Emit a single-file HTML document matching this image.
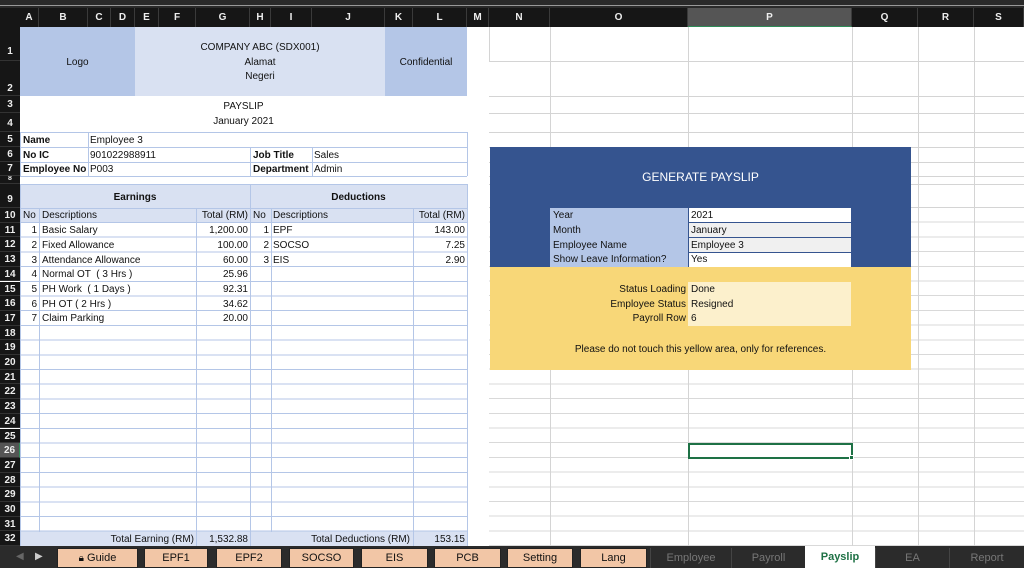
<!DOCTYPE html>
<html><head><meta charset="utf-8"><style>
*{margin:0;padding:0;box-sizing:border-box}
body{width:1024px;height:568px;overflow:hidden;background:#fff;font-family:"Liberation Sans",Arial,sans-serif;font-size:10px;color:#111;position:relative}
.a{position:absolute}
.t{position:absolute;white-space:nowrap;line-height:14px;margin-top:1px}
.ch{position:absolute;top:8px;height:19px;color:#eee;font-weight:bold;font-size:10px;text-align:center;line-height:19px;border-right:1px solid #3a3a3a}
.rh{position:absolute;left:0;width:20px;color:#eee;font-weight:bold;font-size:10px;text-align:center;background:#161616;border-bottom:1px solid #333}
.hl{position:absolute;height:1px;background:#d4d4d4}
.vl{position:absolute;width:1px;background:#d4d4d4}
.bl{position:absolute;height:1px;background:#b4c6e7}
.bv{position:absolute;width:1px;background:#b4c6e7}
.r{text-align:right}
.tab{position:absolute;top:548px;height:20px;background:#f2c6a6;border:1px solid #222;text-align:center;line-height:18px;font-size:11px;color:#111}
.dt{position:absolute;top:548px;height:20px;text-align:center;line-height:20px;font-size:11px;color:#777;border-left:1px solid #444}
</style></head><body>
<div class="a" style="left:0;top:0;width:1024px;height:8px;background:#2a2a2a"></div>
<div class="a" style="left:0;top:5px;width:1024px;height:1px;background:#999"></div>
<div class="a" style="left:0;top:8px;width:1024px;height:19px;background:#161616"></div>
<div class="ch" style="left:20px;width:19px">A</div>
<div class="ch" style="left:39px;width:49px">B</div>
<div class="ch" style="left:88px;width:23px">C</div>
<div class="ch" style="left:111px;width:24px">D</div>
<div class="ch" style="left:135px;width:24px">E</div>
<div class="ch" style="left:159px;width:37px">F</div>
<div class="ch" style="left:196px;width:54px">G</div>
<div class="ch" style="left:250px;width:21px">H</div>
<div class="ch" style="left:271px;width:41px">I</div>
<div class="ch" style="left:312px;width:73px">J</div>
<div class="ch" style="left:385px;width:28px">K</div>
<div class="ch" style="left:413px;width:54px">L</div>
<div class="ch" style="left:467px;width:22px">M</div>
<div class="ch" style="left:489px;width:61px">N</div>
<div class="ch" style="left:550px;width:138px">O</div>
<div class="ch" style="left:688px;width:164px;background:#555;border-bottom:1px solid #2e8b57">P</div>
<div class="ch" style="left:852px;width:66px">Q</div>
<div class="ch" style="left:918px;width:56px">R</div>
<div class="ch" style="left:974px;width:50px">S</div>

<div class="rh" style="top:27px;height:34px;line-height:50px">1</div>
<div class="rh" style="top:61px;height:35px;line-height:56px">2</div>
<div class="rh" style="top:96px;height:17px;line-height:18px">3</div>
<div class="rh" style="top:113px;height:19px;line-height:22px">4</div>
<div class="rh" style="top:132px;height:15px;line-height:15px">5</div>
<div class="rh" style="top:147px;height:15px;line-height:15px">6</div>
<div class="rh" style="top:162px;height:14px;line-height:14px">7</div>
<div class="rh" style="top:176px;height:8px;line-height:6px;font-size:7px;overflow:hidden">8</div>
<div class="rh" style="top:184px;height:24px;line-height:32px">9</div>
<div class="rh" style="top:208px;height:14.7px;line-height:15px">10</div>
<div class="rh" style="top:222.7px;height:14.7px;line-height:15px">11</div>
<div class="rh" style="top:237.4px;height:14.7px;line-height:15px">12</div>
<div class="rh" style="top:252.1px;height:14.7px;line-height:15px">13</div>
<div class="rh" style="top:266.8px;height:14.7px;line-height:15px">14</div>
<div class="rh" style="top:281.5px;height:14.7px;line-height:15px">15</div>
<div class="rh" style="top:296.2px;height:14.7px;line-height:15px">16</div>
<div class="rh" style="top:310.9px;height:14.7px;line-height:15px">17</div>
<div class="rh" style="top:325.6px;height:14.7px;line-height:15px">18</div>
<div class="rh" style="top:340.3px;height:14.7px;line-height:15px">19</div>
<div class="rh" style="top:355px;height:14.7px;line-height:15px">20</div>
<div class="rh" style="top:369.7px;height:14.7px;line-height:15px">21</div>
<div class="rh" style="top:384.4px;height:14.7px;line-height:15px">22</div>
<div class="rh" style="top:399.1px;height:14.7px;line-height:15px">23</div>
<div class="rh" style="top:413.8px;height:14.7px;line-height:15px">24</div>
<div class="rh" style="top:428.5px;height:14.7px;line-height:15px">25</div>
<div class="rh" style="top:443.2px;height:14.7px;line-height:15px;background:#555;border-right:1px solid #2e8b57">26</div>
<div class="rh" style="top:457.9px;height:14.7px;line-height:15px">27</div>
<div class="rh" style="top:472.6px;height:14.7px;line-height:15px">28</div>
<div class="rh" style="top:487.3px;height:14.7px;line-height:15px">29</div>
<div class="rh" style="top:502px;height:14.7px;line-height:15px">30</div>
<div class="rh" style="top:516.7px;height:14.7px;line-height:15px">31</div>
<div class="rh" style="top:531.4px;height:14.6px;line-height:15px">32</div>

<div class="a" style="left:489px;top:208px;width:535px;height:338px;background:repeating-linear-gradient(to bottom,transparent 0,transparent 13.7px,#d9d9d9 13.7px,#d9d9d9 14.7px)"></div>
<div class="hl" style="left:489px;top:61px;width:535px"></div>
<div class="hl" style="left:489px;top:96px;width:535px"></div>
<div class="hl" style="left:489px;top:113px;width:535px"></div>
<div class="hl" style="left:489px;top:132px;width:535px"></div>
<div class="hl" style="left:489px;top:147px;width:535px"></div>
<div class="hl" style="left:489px;top:162px;width:535px"></div>
<div class="hl" style="left:489px;top:176px;width:535px"></div>
<div class="hl" style="left:489px;top:184px;width:535px"></div>
<div class="hl" style="left:489px;top:207px;width:535px"></div>
<div class="vl" style="left:489px;top:27px;height:34px"></div>
<div class="vl" style="left:550px;top:27px;height:519px"></div>
<div class="vl" style="left:688px;top:27px;height:519px"></div>
<div class="vl" style="left:852px;top:27px;height:519px"></div>
<div class="vl" style="left:918px;top:27px;height:519px"></div>
<div class="vl" style="left:974px;top:27px;height:519px"></div>

<div class="a" style="left:490px;top:147px;width:421px;height:120px;background:#35548f"></div>
<div class="t" style="left:490px;top:169px;width:421px;text-align:center;color:#fff;font-size:12px">GENERATE PAYSLIP</div>
<div class="a" style="left:550px;top:208px;width:138px;height:59px;background:#b4c6e7"></div>
<div class="a" style="left:689px;top:208px;width:162px;height:14px;background:#fff"></div>
<div class="a" style="left:689px;top:223px;width:162px;height:14px;background:#f0f0f0"></div>
<div class="a" style="left:689px;top:238px;width:162px;height:14px;background:#f0f0f0"></div>
<div class="a" style="left:689px;top:253px;width:162px;height:14px;background:#fff"></div>
<div class="t" style="left:553px;top:208px">Year</div>
<div class="t" style="left:553px;top:223px">Month</div>
<div class="t" style="left:553px;top:238px">Employee Name</div>
<div class="t" style="left:553px;top:252px">Show Leave Information?</div>
<div class="t" style="left:691px;top:208px">2021</div>
<div class="t" style="left:691px;top:223px">January</div>
<div class="t" style="left:691px;top:238px">Employee 3</div>
<div class="t" style="left:691px;top:252px">Yes</div>
<div class="a" style="left:490px;top:267px;width:421px;height:103px;background:#f8d778"></div>
<div class="a" style="left:688px;top:282px;width:163px;height:44px;background:#fcf0cc"></div>
<div class="t r" style="left:550px;width:136px;top:282px">Status Loading</div>
<div class="t r" style="left:550px;width:136px;top:297px">Employee Status</div>
<div class="t r" style="left:550px;width:136px;top:311px">Payroll Row</div>
<div class="t" style="left:691px;top:282px">Done</div>
<div class="t" style="left:691px;top:297px">Resigned</div>
<div class="t" style="left:691px;top:311px">6</div>
<div class="t" style="left:490px;width:421px;top:342px;text-align:center">Please do not touch this yellow area, only for references.</div>
<div class="a" style="left:688px;top:443px;width:165px;height:16px;border:2px solid #1e7145"></div>
<div class="a" style="left:849px;top:455px;width:5px;height:5px;background:#1e7145;border:1px solid #fff"></div>

<div class="a" style="left:20px;top:27px;width:115px;height:69px;background:#b4c6e7"></div>
<div class="a" style="left:135px;top:27px;width:250px;height:69px;background:#d9e1f2"></div>
<div class="a" style="left:385px;top:27px;width:82px;height:69px;background:#b4c6e7"></div>
<div class="t" style="left:20px;width:115px;top:55px;text-align:center">Logo</div>
<div class="t" style="left:385px;width:82px;top:55px;text-align:center">Confidential</div>
<div class="t" style="left:135px;width:250px;top:40px;text-align:center">COMPANY ABC (SDX001)</div>
<div class="t" style="left:135px;width:250px;top:55px;text-align:center">Alamat</div>
<div class="t" style="left:135px;width:250px;top:69px;text-align:center">Negeri</div>
<div class="t" style="left:20px;width:447px;top:99px;text-align:center">PAYSLIP</div>
<div class="t" style="left:20px;width:447px;top:114px;text-align:center">January 2021</div>

<div class="bl" style="left:20px;top:132px;width:447px"></div>
<div class="bl" style="left:20px;top:147px;width:447px"></div>
<div class="bl" style="left:20px;top:162px;width:447px"></div>
<div class="bl" style="left:20px;top:176px;width:447px"></div>
<div class="bv" style="left:20px;top:132px;height:44px"></div>
<div class="bv" style="left:88px;top:132px;height:44px"></div>
<div class="bv" style="left:250px;top:147px;height:29px"></div>
<div class="bv" style="left:312px;top:147px;height:29px"></div>
<div class="bv" style="left:467px;top:132px;height:44px"></div>
<div class="t" style="left:23px;top:133px;font-weight:bold">Name</div>
<div class="t" style="left:23px;top:148px;font-weight:bold">No IC</div>
<div class="t" style="left:23px;top:162px;font-weight:bold">Employee No</div>
<div class="t" style="left:90px;top:133px">Employee 3</div>
<div class="t" style="left:90px;top:148px">901022988911</div>
<div class="t" style="left:90px;top:162px">P003</div>
<div class="t" style="left:253px;top:148px;font-weight:bold">Job Title</div>
<div class="t" style="left:253px;top:162px;font-weight:bold">Department</div>
<div class="t" style="left:314px;top:148px">Sales</div>
<div class="t" style="left:314px;top:162px">Admin</div>

<div class="a" style="left:20px;top:184px;width:447px;height:39px;background:#d9e1f2"></div>
<div class="a" style="left:20px;top:531px;width:447px;height:15px;background:#d9e1f2"></div>
<div class="a" style="left:20px;top:222px;width:447px;height:310px;background:repeating-linear-gradient(to bottom,#b4c6e7 0,#b4c6e7 1px,transparent 1px,transparent 14.7px)"></div>
<div class="bl" style="left:20px;top:184px;width:447px"></div>
<div class="bl" style="left:20px;top:208px;width:447px"></div>
<div class="bv" style="left:20px;top:184px;height:362px"></div>
<div class="bv" style="left:250px;top:184px;height:362px"></div>
<div class="bv" style="left:467px;top:184px;height:362px"></div>
<div class="bv" style="left:39px;top:208px;height:324px"></div>
<div class="bv" style="left:196px;top:208px;height:338px"></div>
<div class="bv" style="left:271px;top:208px;height:324px"></div>
<div class="bv" style="left:413px;top:208px;height:338px"></div>
<div class="t" style="left:20px;width:230px;top:190px;text-align:center;font-weight:bold">Earnings</div>
<div class="t" style="left:250px;width:217px;top:190px;text-align:center;font-weight:bold">Deductions</div>
<div class="t" style="left:23px;top:208px">No</div>
<div class="t" style="left:42px;top:208px">Descriptions</div>
<div class="t r" style="left:196px;width:52px;top:208px">Total (RM)</div>
<div class="t" style="left:253px;top:208px">No</div>
<div class="t" style="left:273px;top:208px">Descriptions</div>
<div class="t r" style="left:413px;width:52px;top:208px">Total (RM)</div>

<div class="t r" style="left:20px;width:17px;top:223px">1</div><div class="t" style="left:42px;top:223px">Basic Salary</div><div class="t r" style="left:196px;width:52px;top:223px">1,200.00</div>
<div class="t r" style="left:20px;width:17px;top:238px">2</div><div class="t" style="left:42px;top:238px">Fixed Allowance</div><div class="t r" style="left:196px;width:52px;top:238px">100.00</div>
<div class="t r" style="left:20px;width:17px;top:253px">3</div><div class="t" style="left:42px;top:253px">Attendance Allowance</div><div class="t r" style="left:196px;width:52px;top:253px">60.00</div>
<div class="t r" style="left:20px;width:17px;top:267px">4</div><div class="t" style="left:42px;top:267px">Normal OT &nbsp;( 3 Hrs )</div><div class="t r" style="left:196px;width:52px;top:267px">25.96</div>
<div class="t r" style="left:20px;width:17px;top:282px">5</div><div class="t" style="left:42px;top:282px">PH Work &nbsp;( 1 Days )</div><div class="t r" style="left:196px;width:52px;top:282px">92.31</div>
<div class="t r" style="left:20px;width:17px;top:297px">6</div><div class="t" style="left:42px;top:297px">PH OT ( 2 Hrs )</div><div class="t r" style="left:196px;width:52px;top:297px">34.62</div>
<div class="t r" style="left:20px;width:17px;top:311px">7</div><div class="t" style="left:42px;top:311px">Claim Parking</div><div class="t r" style="left:196px;width:52px;top:311px">20.00</div>
<div class="t r" style="left:250px;width:19px;top:223px">1</div><div class="t" style="left:273px;top:223px">EPF</div><div class="t r" style="left:413px;width:52px;top:223px">143.00</div>
<div class="t r" style="left:250px;width:19px;top:238px">2</div><div class="t" style="left:273px;top:238px">SOCSO</div><div class="t r" style="left:413px;width:52px;top:238px">7.25</div>
<div class="t r" style="left:250px;width:19px;top:253px">3</div><div class="t" style="left:273px;top:253px">EIS</div><div class="t r" style="left:413px;width:52px;top:253px">2.90</div>
<div class="t r" style="left:20px;width:174px;top:532px">Total Earning (RM)</div>
<div class="t r" style="left:196px;width:52px;top:532px">1,532.88</div>
<div class="t r" style="left:250px;width:160px;top:532px">Total Deductions (RM)</div>
<div class="t r" style="left:413px;width:52px;top:532px">153.15</div>

<div class="a" style="left:0;top:546px;width:1024px;height:22px;background:#2b2b2b"></div>
<div class="t" style="left:16px;top:549px;color:#666;font-size:10px">◀</div>
<div class="t" style="left:35px;top:549px;color:#ccc;font-size:10px">▶</div>
<div class="tab" style="left:57px;width:81px"><span style="font-size:10px">🔒︎</span> Guide</div>
<div class="tab" style="left:144px;width:64px">EPF1</div>
<div class="tab" style="left:216px;width:66px">EPF2</div>
<div class="tab" style="left:289px;width:65px">SOCSO</div>
<div class="tab" style="left:361px;width:67px">EIS</div>
<div class="tab" style="left:434px;width:67px">PCB</div>
<div class="tab" style="left:507px;width:66px">Setting</div>
<div class="tab" style="left:580px;width:67px">Lang</div>
<div class="dt" style="left:650px;width:81px">Employee</div>
<div class="dt" style="left:731px;width:74px">Payroll</div>
<div class="a" style="left:805px;top:546px;width:70px;height:22px;background:#fff;text-align:center;line-height:22px;font-size:11px;color:#1e7145;font-weight:bold">Payslip</div>
<div class="dt" style="left:875px;width:74px">EA</div>
<div class="dt" style="left:949px;width:75px">Report</div>
</body></html>
